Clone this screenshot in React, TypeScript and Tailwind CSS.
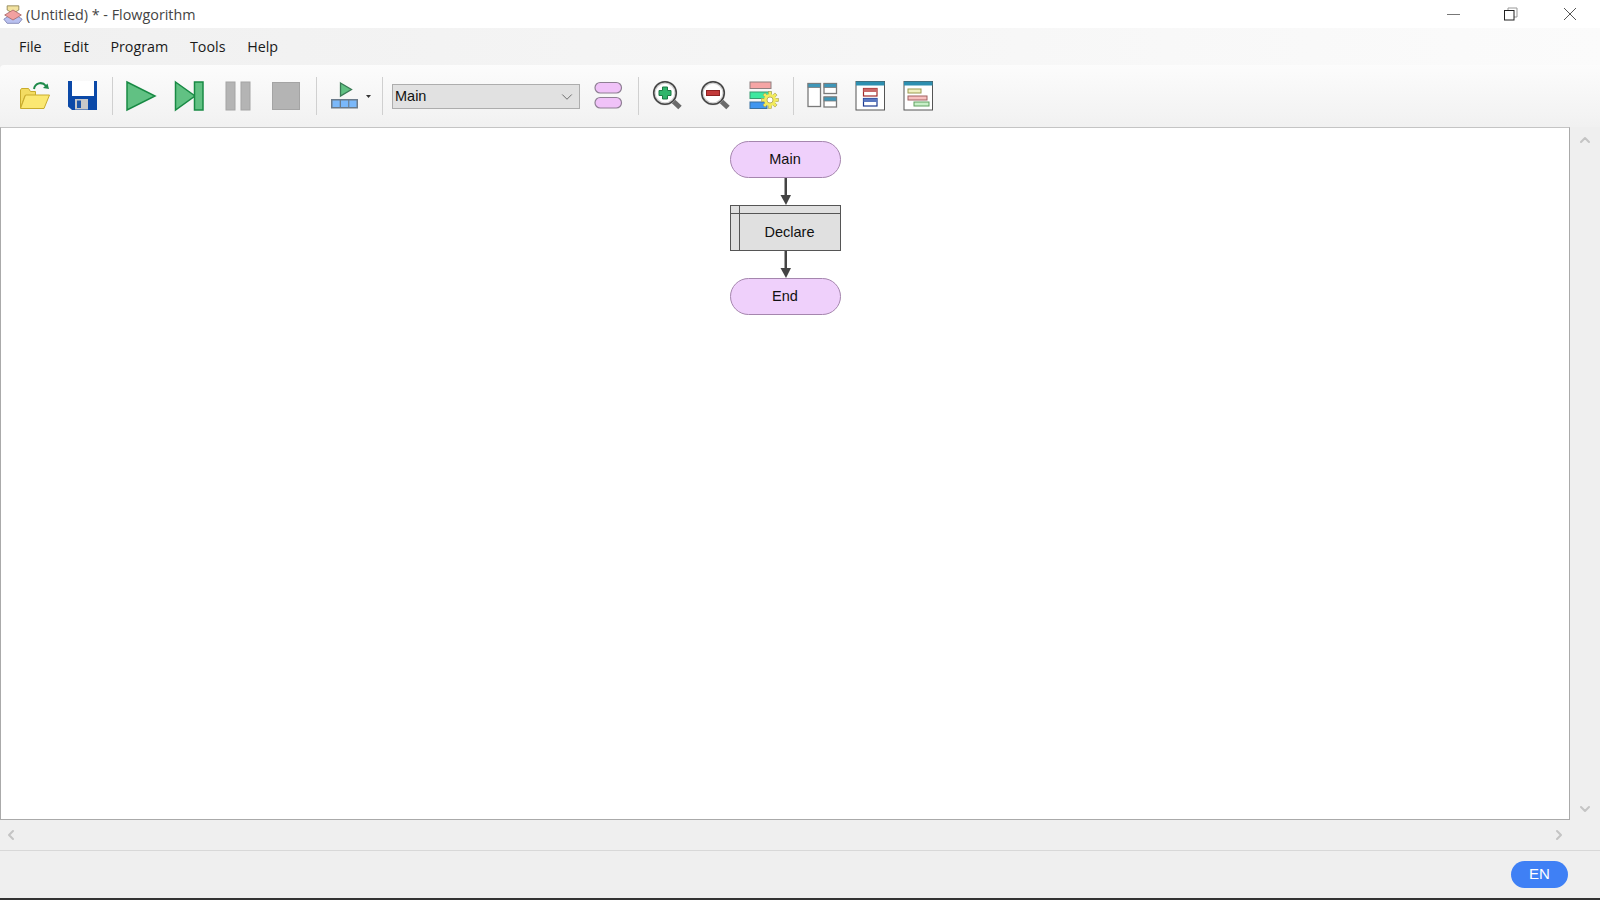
import { ChevronDown, ChevronLeft, ChevronRight, ChevronUp } from "lucide-react";

const segoe = { fontFamily: '"Open Sans", "Noto Sans", sans-serif' };

function AppLogo() {
  return (
    <svg width="20" height="20" viewBox="0 0 24 24">
      <path d="M5 1h14v5l-7 4-7-4z" fill="#f3e3a0" stroke="#8a8050" />
      <path d="M1 17l6-4h10l6 4-4 5H5z" fill="#b9c0ef" stroke="#7a80b0" />
      <path d="M2 12l10-6 10 6-10 6z" fill="#f2a0a0" stroke="#a86a6a" />
    </svg>
  );
}

function OpenIcon() {
  return (
    <svg width="34" height="34" viewBox="0 0 34 34">
      <path d="M3.5 29V11l1-1.5h7l2 3h5v4H8z" fill="#f3dc62" stroke="#c9ac2c" />
      <path d="M3.5 29.5L8.5 16h24l-5.5 13.5z" fill="#fbe872" stroke="#c9ac2c" />
      <path d="M17 10c1-6 8-8 12-3" fill="none" stroke="#1e8a4a" strokeWidth="2" />
      <path d="M32 10l-6-1 4.500-4.500z" fill="#1e8a4a" />
    </svg>
  );
}

function SaveIcon() {
  return (
    <svg width="32" height="32" viewBox="0 0 32 32">
      <path d="M2 1h29v29H6l-4-3.500z" fill="#0b49a8" />
      <rect x="6" y="1" width="22" height="15" fill="#fff" />
      <rect x="9" y="19" width="13" height="10.500" fill="#c8c8c8" />
      <rect x="11" y="20.500" width="4" height="7.500" fill="#1c55a8" />
    </svg>
  );
}

function PlayIcon() {
  return (
    <svg width="32" height="32" viewBox="0 0 32 32">
      <path d="M2 2l28 14L2 30z" fill="#61c183" stroke="#188a44" strokeWidth="1.5" />
    </svg>
  );
}

function StepIcon() {
  return (
    <svg width="32" height="32" viewBox="0 0 32 32">
      <path d="M2.500 2l19.500 14L2.500 30z" fill="#61c183" stroke="#188a44" strokeWidth="1.5" />
      <rect x="21.500" y="2" width="8.500" height="28" fill="#61c183" stroke="#188a44" strokeWidth="1.5" />
    </svg>
  );
}

function PauseIcon() {
  return (
    <svg width="28" height="30" viewBox="0 0 28 30">
      <rect x="2" y="1" width="9" height="28" fill="#b4b4b4" stroke="#a4a4a4" />
      <rect x="17" y="1" width="9" height="28" fill="#b4b4b4" stroke="#a4a4a4" />
    </svg>
  );
}

function StopIcon() {
  return (
    <svg width="28" height="28" viewBox="0 0 28 28">
      <rect x="0.500" y="0.500" width="27" height="27" fill="#b4b4b4" stroke="#a4a4a4" />
    </svg>
  );
}

function RunModeIcon() {
  return (
    <svg width="30" height="30" viewBox="0 0 30 30">
      <path d="M10.500 2l11 6.500-11 6.500z" fill="#61c183" stroke="#3a7a55" strokeWidth="1.3" />
      <rect x="1" y="18" width="27" height="9.500" fill="#6a7a8a" />
      <rect x="2.500" y="19.500" width="7.200" height="6.500" fill="#7ab8fa" />
      <rect x="11" y="19.500" width="7.200" height="6.500" fill="#7ab8fa" />
      <rect x="19.300" y="19.500" width="7.200" height="6.500" fill="#7ab8fa" />
    </svg>
  );
}

function PillsIcon() {
  return (
    <svg width="30" height="30" viewBox="0 0 30 30">
      <rect x="1" y="1.500" width="26.500" height="10.500" rx="5.200" fill="#f0c2f8" stroke="#8f7f94" strokeWidth="1.2" />
      <rect x="1" y="16.500" width="26.500" height="10.500" rx="5.200" fill="#f0c2f8" stroke="#8f7f94" strokeWidth="1.2" />
    </svg>
  );
}

function ZoomIcon({ plus }: { plus: boolean }) {
  return (
    <svg width="32" height="32" viewBox="0 0 32 32">
      <line x1="21" y1="21" x2="28" y2="27.500" stroke="#6a6a6a" strokeWidth="5" />
      <circle cx="13" cy="13" r="10.800" fill="#fff" stroke="#d0d0d0" strokeWidth="3" />
      <circle cx="13" cy="13" r="11.300" fill="none" stroke="#444" strokeWidth="1.500" />
      {plus ? (
        <path d="M10.500 7h5v3.500H19v5h-3.500V19h-5v-3.500H7v-5h3.500z" fill="#2fb56a" stroke="#1c7a45" />
      ) : (
        <rect x="6.500" y="10.500" width="13" height="5" fill="#c23a3a" stroke="#8f2222" />
      )}
    </svg>
  );
}

function SettingsIcon() {
  const teeth = [0, 45, 90, 135];
  return (
    <svg width="32" height="32" viewBox="0 0 32 32">
      <rect x="2" y="2" width="21" height="6.500" fill="#f5a5a5" stroke="#8f8080" />
      <rect x="2" y="12" width="21" height="6.500" fill="#3fe8a0" stroke="#3a9a70" />
      <rect x="2" y="22" width="17" height="6.500" fill="#3f96f0" stroke="#3a70a0" />
      {teeth.map((a) => (
        <rect key={a} x="20.500" y="11.500" width="3" height="17" fill="#f2ea5c" stroke="#a8a050" strokeWidth="0.6" transform={`rotate(${a} 22 20)`} />
      ))}
      <circle cx="22" cy="20" r="6" fill="#f2ea5c" />
      <circle cx="22" cy="20" r="3" fill="#fff" stroke="#a8a050" strokeWidth="0.8" />
    </svg>
  );
}

function LayoutIcon() {
  return (
    <svg width="32" height="32" viewBox="0 0 32 32">
      <rect x="2" y="3.500" width="12.500" height="23" fill="#fff" stroke="#7a7a7a" strokeWidth="1.300" />
      <rect x="2" y="3.500" width="12.500" height="4" fill="#3f96b8" stroke="#7a7a7a" strokeWidth="0.800" />
      <rect x="18" y="3.500" width="12.500" height="10" fill="#fff" stroke="#7a7a7a" strokeWidth="1.300" />
      <rect x="18" y="3.500" width="12.500" height="4" fill="#3f96b8" stroke="#7a7a7a" strokeWidth="0.800" />
      <rect x="18" y="17" width="12.500" height="10" fill="#fff" stroke="#7a7a7a" strokeWidth="1.300" />
      <rect x="18" y="17" width="12.500" height="4" fill="#3f96b8" stroke="#7a7a7a" strokeWidth="0.800" />
    </svg>
  );
}

function WindowStackIcon() {
  return (
    <svg width="32" height="32" viewBox="0 0 32 32">
      <rect x="2" y="1.500" width="28.500" height="28.500" fill="#fff" stroke="#555" strokeWidth="1" />
      <rect x="2" y="1.500" width="28.500" height="4" fill="#2d8fb0" />
      <rect x="9.500" y="8.500" width="13.500" height="7.500" fill="#fff" stroke="#a02a2a" strokeWidth="1.200" />
      <rect x="9.500" y="8.500" width="13.500" height="3.500" fill="#c96a6a" />
      <rect x="9.500" y="18.500" width="13.500" height="7.500" fill="#fff" stroke="#1c3a90" strokeWidth="1.200" />
      <rect x="9.500" y="18.500" width="13.500" height="3.500" fill="#5a78c0" />
    </svg>
  );
}

function WindowBarsIcon() {
  return (
    <svg width="32" height="32" viewBox="0 0 32 32">
      <rect x="2" y="1.500" width="28.500" height="28.500" fill="#fff" stroke="#555" strokeWidth="1" />
      <rect x="2" y="1.500" width="28.500" height="4" fill="#2d8fb0" />
      <rect x="6" y="9" width="13" height="4" fill="#f0f0c0" stroke="#9a9a50" />
      <rect x="6" y="16" width="19" height="4" fill="#f8c0c0" stroke="#a06060" />
      <rect x="12" y="22" width="15" height="4" fill="#c8f0c8" stroke="#60a060" />
    </svg>
  );
}

function Sep() {
  return <div className="w-px h-[38px] bg-[#d0d0d0]" />;
}

function Tool({ children, w = "w-12" }: { children: React.ReactNode; w?: string }) {
  return <div className={`${w} h-[38px] flex items-center justify-center shrink-0`}>{children}</div>;
}

function Pill({ label }: { label: string }) {
  return (
    <div className="w-[111px] h-[37px] rounded-[19px] bg-[#efd0fb] border border-[#a586ae] flex items-center justify-center pr-[1px] pt-[1px] text-[14.5px] text-[#111]">
      {label}
    </div>
  );
}

function Arrow() {
  return (
    <svg width="12" height="27" viewBox="0 0 12 27" className="block">
      <rect x="4.500" y="0" width="2.500" height="20" fill="#444" />
      <path d="M0.500 17h10.500l-5 10z" fill="#444" />
    </svg>
  );
}

export default function App() {
  return (
    <div className="w-[1600px] h-[900px] flex flex-col overflow-hidden bg-[#efefef] font-['Liberation_Sans',Arial,sans-serif]">
      {/* title bar */}
      <div className="h-[28px] bg-white flex items-center shrink-0">
        <div className="w-[26px] flex justify-center pt-[1px]"><AppLogo /></div>
        <span style={segoe} className="text-[14.35px] text-[#444] pt-[1px]">(Untitled) * - Flowgorithm</span>
        <div className="ml-auto flex items-center h-full">
          <div className="w-[58px] flex justify-center">
            <div className="w-[13px] h-px bg-[#777]" />
          </div>
          <div className="w-[58px] flex justify-center">
            <svg width="14" height="14" viewBox="0 0 14 14">
              <path d="M4 3V1h9v9h-3" fill="none" stroke="#999" />
              <rect x="0.500" y="3.500" width="9.500" height="9.500" fill="#fff" stroke="#222" />
            </svg>
          </div>
          <div className="w-[60px] flex justify-center">
            <svg width="14" height="14" viewBox="0 0 14 14">
              <path d="M1 1l12 12M13 1L1 13" stroke="#555" strokeWidth="1" />
            </svg>
          </div>
        </div>
      </div>

      {/* menu */}
      <div style={segoe} className="h-[37px] shrink-0 flex items-center pl-[19px] gap-[21.7px] text-[14.3px] text-[#1a1a1a] bg-gradient-to-r from-[#f0f0f0] to-[#fbfbfb]">
        <span>File</span>
        <span>Edit</span>
        <span>Program</span>
        <span>Tools</span>
        <span>Help</span>
      </div>

      {/* toolbar */}
      <div className="h-[62px] shrink-0 flex items-center pl-[10px] rounded-tl-[4px] bg-gradient-to-b from-[#fcfcfc] to-[#f1f1f1]">
        <Tool><OpenIcon /></Tool>
        <Tool><SaveIcon /></Tool>
        <div className="ml-[6px] mr-[4px]"><Sep /></div>
        <Tool><PlayIcon /></Tool>
        <div className="mr-[1px]"><Tool><StepIcon /></Tool></div>
        <Tool><PauseIcon /></Tool>
        <Tool><StopIcon /></Tool>
        <div className="ml-[6px] mr-[11px]"><Sep /></div>
        <Tool w="w-[34px]"><RunModeIcon /></Tool>
        <svg width="5" height="3" viewBox="0 0 5 3" className="ml-[4px]"><path d="M0 0h5L2.500 3z" fill="#333" /></svg>
        <div className="ml-[11px]"><Sep /></div>
        <div className="ml-[9px] w-[188px] h-[25px] bg-[#e1e1e1] border border-[#adadad] flex items-center pl-[2px] pr-[3px] pt-[1px] text-[14.5px] text-[#111]">
          <span>Main</span>
          <ChevronDown size={18} strokeWidth={1.100} className="ml-auto text-[#555]" />
        </div>
        <Tool w="w-[58px]"><PillsIcon /></Tool>
        <Sep />
        <div className="ml-[5px]"><Tool><ZoomIcon plus /></Tool></div>
        <Tool><ZoomIcon plus={false} /></Tool>
        <Tool><SettingsIcon /></Tool>
        <div className="ml-[5px] mr-[4px]"><Sep /></div>
        <Tool><LayoutIcon /></Tool>
        <Tool><WindowStackIcon /></Tool>
        <Tool><WindowBarsIcon /></Tool>
      </div>

      {/* canvas + vertical scrollbar */}
      <div className="h-[693px] shrink-0 flex">
        <div className="w-[1570px] border border-[#aaaaaa] border-t-[#c4c4c4] bg-white pl-[729px] pt-[13px]">
          <div className="w-[111px] flex flex-col items-center">
            <Pill label="Main" />
            <Arrow />
            <div className="w-[111px] h-[46px] bg-[#e0e0e0] border border-[#555] flex flex-col">
              <div className="h-[8px] flex border-b border-[#555]">
                <div className="w-[9px] border-r border-[#555]" />
              </div>
              <div className="flex-1 flex">
                <div className="w-[9px] border-r border-[#555]" />
                <div className="flex-1 flex items-center justify-center pt-[1px] pr-[1px] text-[14.5px] text-[#111]">Declare</div>
              </div>
            </div>
            <Arrow />
            <Pill label="End" />
          </div>
        </div>
        <div className="flex-1 flex flex-col items-center justify-between pt-[5px] pb-[3px] text-[#c4c4c4]">
          <ChevronUp size={16} strokeWidth={3} />
          <ChevronDown size={16} strokeWidth={3} />
        </div>
      </div>

      {/* horizontal scrollbar */}
      <div className="h-[31px] shrink-0 flex items-center justify-between pl-[3px] pr-[33px] text-[#c4c4c4] border-b border-[#d8d8d8]">
        <ChevronLeft size={16} strokeWidth={3} />
        <ChevronRight size={16} strokeWidth={3} />
      </div>

      {/* status bar */}
      <div className="flex-1 flex items-center justify-end pr-[32px]">
        <div className="w-[57px] h-[27px] rounded-full bg-[#3f80f5] text-white text-[15px] flex items-center justify-center">EN</div>
      </div>
      <div className="h-[2px] shrink-0 bg-[#333]" />
    </div>
  );
}
